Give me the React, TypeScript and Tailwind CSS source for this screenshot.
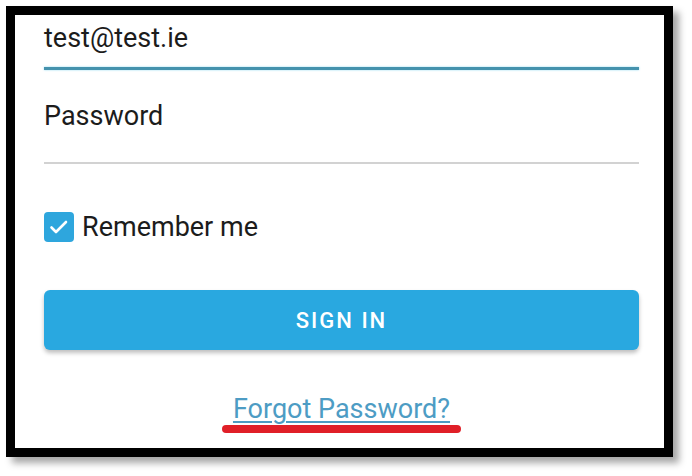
export default function App() {
  return (
    <div className="h-[476px] w-[692px] bg-white pl-[6px] pt-[6px] font-['Roboto',sans-serif]">
      <div className="h-[451px] w-[667px] border-[9px] border-black bg-white pl-[29px] pr-[25px] pt-[8px] shadow-[6px_6px_7px_rgba(0,0,0,0.35)]">
        <div className="text-[27px] leading-[30px] text-[#1c1c1c]">test@test.ie</div>
        <div className="mt-[14px] h-[3px] bg-[#4592ad] shadow-[0_0_2px_rgba(120,210,240,0.9)]" />

        <div className="mt-[31px] text-[27px] leading-[30px] text-[#1c1c1c]">Password</div>
        <div className="mt-[31px] h-[2px] bg-[#d2d2d2]" />

        <label className="mt-[48px] flex items-center gap-[8px]">
          <span className="flex h-[30px] w-[30px] items-center justify-center rounded-[4px] bg-[#2ea6dd]">
            <svg viewBox="0 0 24 24" className="h-[24px] w-[24px]" fill="none" stroke="white" strokeWidth="2.6" strokeLinecap="round" strokeLinejoin="round">
              <path d="M4.5 12.5l4.5 4.5 10-10" />
            </svg>
          </span>
          <span className="text-[27px] leading-[30px] text-[#1c1c1c]">Remember me</span>
        </label>

        <button
          type="button"
          className="mt-[48px] flex h-[60px] w-full items-center justify-center rounded-[6px] bg-[#29a8e0] text-[22px] font-medium tracking-[2px] text-white shadow-[0_3px_4px_rgba(0,0,0,0.25)]"
        >
          SIGN IN
        </button>

        <div className="mt-[44px] flex flex-col items-center">
          <a href="#" className="text-[27px] leading-[30px] text-[#4d9cc4] underline decoration-[2px] underline-offset-[3px]">
            Forgot Password?
          </a>
          <div className="mt-[1px] h-[8px] w-[239px] rounded-full bg-[#e01f28]" />
        </div>
      </div>
    </div>
  );
}
